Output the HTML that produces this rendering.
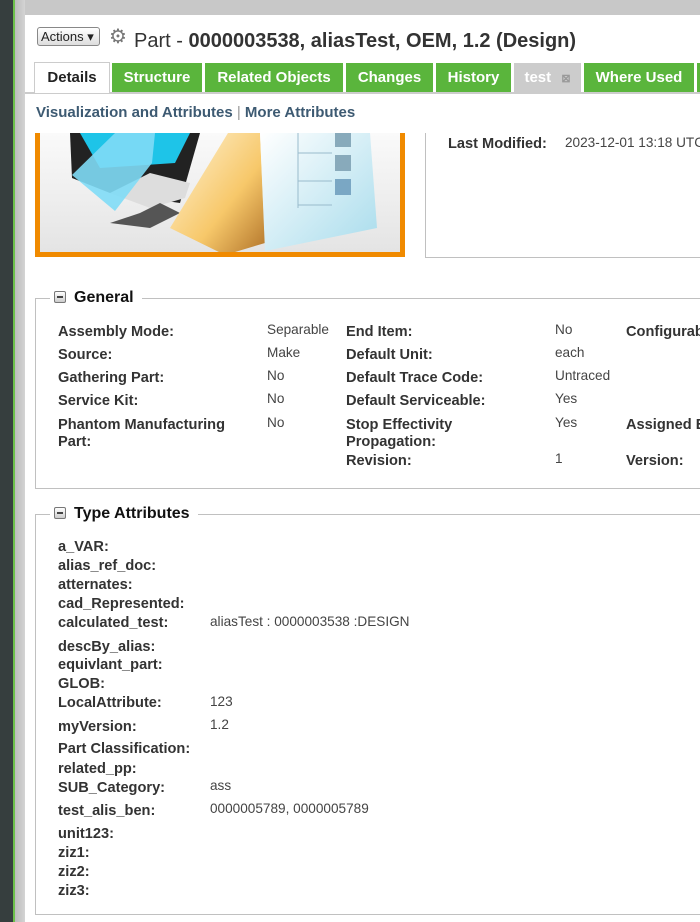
<!DOCTYPE html><html><head><style>
body{margin:0;width:700px;height:922px;position:relative;overflow:hidden;background:#fff;font-family:"Liberation Sans",Arial,sans-serif}
.a{position:absolute;white-space:nowrap;line-height:16px}
.l{font-weight:bold;font-size:14.6px;color:#333}
.v{font-size:13.6px;color:#444}
.tab{position:absolute;top:63px;height:29px;line-height:29px;text-align:center;color:#fff;font-weight:bold;font-size:15px;background:#5ab53c}
.fs{position:absolute;border:1px solid #c0c0c0;border-right:none}
.lg{position:absolute;background:#fff;font-weight:bold;font-size:16px;color:#111;padding:0 8px 0 4px;line-height:20px}
.mi{display:inline-block;width:10px;height:10px;border:1px solid #777;border-radius:2px;background:linear-gradient(#fff,#ccc);vertical-align:-1px;margin-right:8px;position:relative}
.mi:after{content:"";position:absolute;left:2px;right:2px;top:4px;height:2px;background:#444}
</style></head><body>
<div style="position:absolute;left:0;top:0;width:700px;height:15px;background:#c8c8c8"></div>
<div style="position:absolute;left:0;top:0;width:13px;height:922px;background:#363e3e"></div>
<div style="position:absolute;left:13px;top:0;width:2px;height:922px;background:#6cc04a"></div>
<div style="position:absolute;left:15px;top:0;width:10px;height:922px;background:linear-gradient(90deg,#bbb,#d4d4d4)"></div>
<div style="position:absolute;left:25px;top:15px;width:675px;height:907px;background:#fff"></div>
<div style="position:absolute;left:37px;top:27px;width:63px;height:19px;border:1px solid #888;border-radius:3px;background:linear-gradient(#fff,#ddd);font-size:13px;line-height:17px;color:#222;padding-left:3px;box-sizing:border-box">Actions ▾</div>
<div class="a" style="left:109px;top:26px;font-size:20px;color:#777;line-height:22px">⚙</div>
<div class="a" style="left:134px;top:29px;font-size:20px;line-height:24px;color:#333">Part - <b>0000003538, aliasTest, OEM, 1.2 (Design)</b></div>
<div style="position:absolute;left:25px;top:92px;width:675px;height:2px;background:#ccc"></div>
<div class="tab" style="left:34px;width:76px;background:#fff;color:#222;border:1px solid #ccc;border-bottom:none;top:62px;height:31px;box-sizing:border-box;line-height:30px">Details</div>
<div class="tab" style="left:112px;width:90px">Structure</div>
<div class="tab" style="left:205px;width:138px">Related Objects</div>
<div class="tab" style="left:346px;width:87px">Changes</div>
<div class="tab" style="left:436px;width:75px">History</div>
<div class="tab" style="left:514px;width:67px;background:#ccc">test <span style="color:#999;font-size:11px;margin-left:6px">⊠</span></div>
<div class="tab" style="left:584px;width:110px">Where Used</div>
<div class="tab" style="left:697px;width:10px"></div>
<div class="a" style="left:36px;top:105px;font-size:15px;font-weight:bold;color:#3d5a72">Visualization and Attributes <span style="color:#999;font-weight:normal">|</span> More Attributes</div>
<div style="position:absolute;left:35px;top:133px;width:370px;height:124px;background:#f08a00"></div>
<svg style="position:absolute;left:40px;top:133px" width="360" height="119" viewBox="0 0 360 119">
<defs><linearGradient id="g" x1="0" y1="0" x2="0" y2="1"><stop offset="0" stop-color="#fafafa"/><stop offset="1" stop-color="#e4e4e4"/></linearGradient>
<linearGradient id="p" x1="0" y1="0" x2="1" y2="1"><stop offset="0" stop-color="#fff4d8"/><stop offset=".6" stop-color="#f7c86a"/><stop offset="1" stop-color="#b2742a"/></linearGradient>
<linearGradient id="d" x1="0" y1="0" x2="1" y2="1"><stop offset="0" stop-color="#fff"/><stop offset="1" stop-color="#a8dcec"/></linearGradient></defs>
<rect width="360" height="119" fill="url(#g)"/>
<path d="M30 0H160L140 70 70 60 32 45Z" fill="#222"/>
<path d="M40 0H150L135 30 60 35Z" fill="#1ec4e8"/>
<path d="M70 60L110 75 145 65 150 50 110 40Z" fill="#ddd"/>
<path d="M70 90L100 80 120 70 140 80 110 95Z" fill="#555"/>
<path d="M32 42L75 0H115L112 30 75 78Z" fill="#7fdcf6" opacity=".9"/>
<path d="M188 0H220L225 110 185 122 130 95Z" fill="url(#p)"/>
<path d="M220 0H330L337 95 225 118Z" fill="url(#d)"/>
<rect x="295" y="0" width="16" height="14" fill="#8ab"/><rect x="295" y="22" width="16" height="16" fill="#8ab"/><rect x="295" y="46" width="16" height="16" fill="#7aa7c4"/>
<path d="M258 20H292M258 48H292M258 72H292M258 0V75" stroke="#9bc" fill="none"/>
</svg>
<div style="position:absolute;left:425px;top:133px;width:280px;height:124px;border-left:1px solid #c0c0c0;border-bottom:1px solid #c0c0c0"></div>
<div class="a l" style="left:448px;top:136px">Last Modified:</div>
<div class="a v" style="left:565px;top:135px">2023-12-01 13:18 UTC</div>

<div class="fs" style="left:35px;top:298px;width:670px;height:189px"></div>
<div class="lg" style="left:50px;top:288px"><span class="mi"></span>General</div>
<div class="a l" style="left:58px;top:324px">Assembly Mode:</div><div class="a v" style="left:267px;top:322px">Separable</div>
<div class="a l" style="left:58px;top:347px">Source:</div><div class="a v" style="left:267px;top:345px">Make</div>
<div class="a l" style="left:58px;top:370px">Gathering Part:</div><div class="a v" style="left:267px;top:368px">No</div>
<div class="a l" style="left:58px;top:393px">Service Kit:</div><div class="a v" style="left:267px;top:391px">No</div>
<div class="a l" style="left:58px;top:417px;line-height:17px">Phantom Manufacturing<br>Part:</div><div class="a v" style="left:267px;top:415px">No</div>
<div class="a l" style="left:346px;top:324px">End Item:</div><div class="a v" style="left:555px;top:322px">No</div>
<div class="a l" style="left:346px;top:347px">Default Unit:</div><div class="a v" style="left:555px;top:345px">each</div>
<div class="a l" style="left:346px;top:370px">Default Trace Code:</div><div class="a v" style="left:555px;top:368px">Untraced</div>
<div class="a l" style="left:346px;top:393px">Default Serviceable:</div><div class="a v" style="left:555px;top:391px">Yes</div>
<div class="a l" style="left:346px;top:417px;line-height:17px">Stop Effectivity<br>Propagation:</div><div class="a v" style="left:555px;top:415px">Yes</div>
<div class="a l" style="left:346px;top:453px">Revision:</div><div class="a v" style="left:555px;top:451px">1</div>
<div class="a l" style="left:626px;top:324px">Configurable</div>
<div class="a l" style="left:626px;top:417px">Assigned E</div>
<div class="a l" style="left:626px;top:453px">Version:</div>

<div class="fs" style="left:35px;top:514px;width:670px;height:399px"></div>
<div class="lg" style="left:50px;top:504px"><span class="mi"></span>Type Attributes</div>
<div class="a l" style="left:58px;top:539px">a_VAR:</div>
<div class="a l" style="left:58px;top:558px">alias_ref_doc:</div>
<div class="a l" style="left:58px;top:577px">atternates:</div>
<div class="a l" style="left:58px;top:596px">cad_Represented:</div>
<div class="a l" style="left:58px;top:615px">calculated_test:</div><div class="a v" style="left:210px;top:614px">aliasTest : 0000003538 :DESIGN</div>
<div class="a l" style="left:58px;top:639px">descBy_alias:</div>
<div class="a l" style="left:58px;top:657px">equivlant_part:</div>
<div class="a l" style="left:58px;top:676px">GLOB:</div>
<div class="a l" style="left:58px;top:695px">LocalAttribute:</div><div class="a v" style="left:210px;top:694px">123</div>
<div class="a l" style="left:58px;top:719px">myVersion:</div><div class="a v" style="left:210px;top:717px">1.2</div>
<div class="a l" style="left:58px;top:741px">Part Classification:</div>
<div class="a l" style="left:58px;top:761px">related_pp:</div>
<div class="a l" style="left:58px;top:780px">SUB_Category:</div><div class="a v" style="left:210px;top:778px">ass</div>
<div class="a l" style="left:58px;top:803px">test_alis_ben:</div><div class="a v" style="left:210px;top:801px">0000005789, 0000005789</div>
<div class="a l" style="left:58px;top:826px">unit123:</div>
<div class="a l" style="left:58px;top:845px">ziz1:</div>
<div class="a l" style="left:58px;top:864px">ziz2:</div>
<div class="a l" style="left:58px;top:883px">ziz3:</div>
</body></html>
